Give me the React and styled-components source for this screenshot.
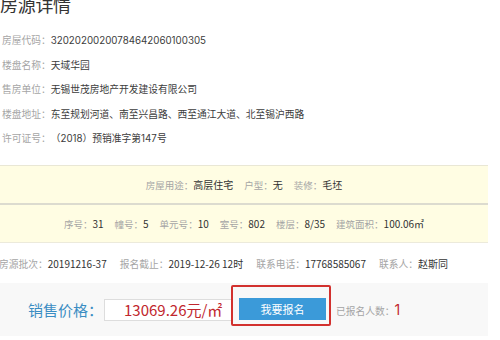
import React from 'react';
import styled, { createGlobalStyle } from 'styled-components';

const GlobalStyle = createGlobalStyle`
  html, body {
    margin: 0;
    padding: 0;
    background: #ffffff;
  }

  body {
    width: 500px;
    height: 340px;
    overflow: hidden;
    font-family: 'Inter', 'Noto Sans CJK SC', sans-serif;
    text-spacing-trim: space-all;
  }
`;

const info = [
  { label: '房屋代码', value: '32020200200784642060100305' },
  { label: '楼盘名称', value: '天域华园' },
  { label: '售房单位', value: '无锡世茂房地产开发建设有限公司' },
  { label: '楼盘地址', value: '东至规划河道、南至兴昌路、西至通江大道、北至锡沪西路' },
  { label: '许可证号', value: '（2018）预销准字第147号' },
];

const usage = [
  { label: '房屋用途', value: '高层住宅' },
  { label: '户型', value: '无' },
  { label: '装修', value: '毛坯' },
];

const unit = [
  { label: '序号', value: '31' },
  { label: '幢号', value: '5' },
  { label: '单元号', value: '10' },
  { label: '室号', value: '802' },
  { label: '楼层', value: '8/35' },
  { label: '建筑面积', value: '100.06㎡' },
];

const contact = [
  { label: '房源批次', value: '20191216-37' },
  { label: '报名截止', value: '2019-12-26 12时' },
  { label: '联系电话', value: '17768585067' },
  { label: '联系人', value: '赵斯同' },
];

const Field = ({ label, value }) => (
  <Item>
    <Label>{label}：</Label>
    <Value>{value}</Value>
  </Item>
);

const App = () => {
  return (
    <>
      <GlobalStyle />
      <Page>
        <Title>房源详情</Title>

        <InfoList>
          {info.map(row => (
            <InfoRow key={row.label}>
              <Label>{row.label}：</Label>
              <InfoValue>{row.value}</InfoValue>
            </InfoRow>
          ))}
        </InfoList>

        <SpecBox>
          <SpecRow>
            {usage.map(f => (
              <Field key={f.label} {...f} />
            ))}
          </SpecRow>
          <SpecRow $divided>
            {unit.map(f => (
              <Field key={f.label} {...f} />
            ))}
          </SpecRow>
        </SpecBox>

        <ContactRow>
          {contact.map(f => (
            <Field key={f.label} {...f} />
          ))}
        </ContactRow>

        <PricePanel>
          <PriceLabel>销售价格：</PriceLabel>
          <PriceBox>13069.26元/㎡</PriceBox>
          <Highlight>
            <ApplyButton>我要报名</ApplyButton>
          </Highlight>
          <Count>
            已报名人数：<CountNum>1</CountNum>
          </Count>
        </PricePanel>
      </Page>
    </>
  );
};

const Page = styled.div`
  width: 488px;
  display: flex;
  flex-direction: column;
`;

const Title = styled.h1`
  margin: -3px 0 0 0;
  font-size: 18px;
  line-height: 18px;
  font-weight: 400;
  color: #333333;
  letter-spacing: -0.3px;
`;

const InfoList = styled.div`
  margin-top: 13px;
  padding-left: 2px;
  display: flex;
  flex-direction: column;
`;

const InfoRow = styled.div`
  display: flex;
  align-items: center;
  height: 24.5px;
  font-size: 9.75px;
  white-space: nowrap;
`;

const Label = styled.span`
  color: #a5a5a5;
`;

const InfoValue = styled.span`
  color: #3c3c3c;
`;

const SpecBox = styled.div`
  margin-top: 14.5px;
  background: #fffde3;
  border-top: 1px solid #e9e7d5;
  border-bottom: 1px solid #eceadb;
`;

const SpecRow = styled.div`
  display: flex;
  justify-content: center;
  align-items: center;
  gap: 11px;
  height: 37px;
  font-size: 9.5px;
  white-space: nowrap;
  border-top: ${({ $divided }) => ($divided ? '2px solid #dcdbcf' : 'none')};
`;

const Item = styled.span`
  display: inline-flex;
  align-items: baseline;
`;

const Value = styled.span`
  color: #333333;
  font-size: 10px;
  font-family: 'Noto Sans CJK SC', sans-serif;
`;

const ContactRow = styled.div`
  display: flex;
  align-items: center;
  gap: 13px;
  height: 40px;
  margin-left: -1px;
  font-size: 9.75px;
  white-space: nowrap;
`;

const PricePanel = styled.div`
  display: flex;
  align-items: center;
  height: 53px;
  padding-left: 28px;
  background: #f8f8f8;
  white-space: nowrap;
`;

const PriceLabel = styled.span`
  font-size: 15px;
  color: #3b8dc3;
  margin-right: 1px;
`;

const PriceBox = styled.div`
  display: flex;
  align-items: center;
  box-sizing: border-box;
  width: 129px;
  height: 22px;
  padding: 0 0 0 19px;
  background: #ffffff;
  border: 1px solid #dddddd;
  font-family: 'Noto Sans CJK SC', sans-serif;
  font-size: 15px;
  color: #c1272d;
`;

const Highlight = styled.div`
  margin: 0 0 9px -2px;
  padding: 11px 3px 4px 6px;
  border: 2px solid #d2312e;
  border-radius: 2px;
`;

const ApplyButton = styled.button`
  display: block;
  width: 87px;
  height: 22px;
  padding: 0;
  border: none;
  background: #3b9ad9;
  color: #ffffff;
  font-family: inherit;
  font-size: 11px;
`;

const Count = styled.span`
  margin-left: 5px;
  font-size: 9.75px;
  color: #a5a5a5;
  display: inline-flex;
  align-items: baseline;
`;

const CountNum = styled.span`
  font-size: 14px;
  color: #c1272d;
`;

export default App;
